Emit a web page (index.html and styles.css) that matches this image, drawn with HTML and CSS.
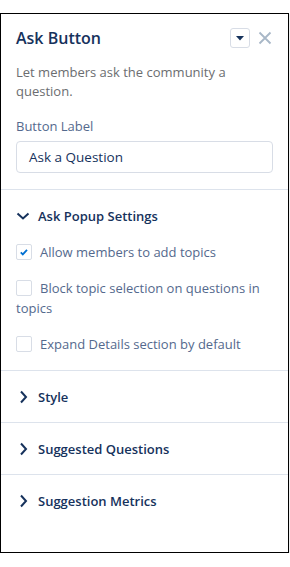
FILE: index.html
```html
<!DOCTYPE html>
<html>
<head>
<meta charset="utf-8">
<link rel="stylesheet" href="styles.css">
</head>
<body>
<div class="panel">
  <div class="head">
    <div class="title-row">
      <h1 class="title">Ask Button</h1>
      <div class="actions">
        <button class="menu-btn" aria-label="menu">
          <svg width="8" height="5" viewBox="0 0 8 5"><path d="M0 0h8L4 4.5z" fill="#16325c"/></svg>
        </button>
        <span class="close">
          <svg width="16" height="16" viewBox="0 0 16 16"><path d="M2.5 2.5l11 11M13.5 2.5l-11 11" stroke="#a8b7c7" stroke-width="1.8" fill="none"/></svg>
        </span>
      </div>
    </div>
    <p class="desc">Let members ask the community a question.</p>
    <label class="field-label">Button Label</label>
    <div class="input">Ask a Question</div>
  </div>

  <div class="section open">
    <div class="sec-head">
      <span class="chev"><svg width="14" height="14" viewBox="0 0 14 14"><path d="M1.5 4.5L7 9.5l5.5-5" stroke="#16325c" stroke-width="2" fill="none"/></svg></span>
      <span class="sec-title">Ask Popup Settings</span>
    </div>
    <div class="checks">
      <div class="check-row"><span class="box"><svg width="14" height="14" viewBox="0 0 14 14"><path d="M3.8 7.4l2 2 4.2-4.6" stroke="#0070d2" stroke-width="1.8" fill="none"/></svg></span>Allow members to add topics</div>
      <div class="check-row"><span class="box"></span>Block topic selection on questions in topics</div>
      <div class="check-row"><span class="box"></span>Expand Details section by default</div>
    </div>
  </div>

  <div class="section">
    <div class="sec-head">
      <span class="chev"><svg width="14" height="14" viewBox="0 0 14 14"><path d="M5 1.5l5 5.5-5 5.5" stroke="#16325c" stroke-width="2" fill="none"/></svg></span>
      <span class="sec-title">Style</span>
    </div>
  </div>
  <div class="section">
    <div class="sec-head">
      <span class="chev"><svg width="14" height="14" viewBox="0 0 14 14"><path d="M5 1.5l5 5.5-5 5.5" stroke="#16325c" stroke-width="2" fill="none"/></svg></span>
      <span class="sec-title">Suggested Questions</span>
    </div>
  </div>
  <div class="section last">
    <div class="sec-head">
      <span class="chev"><svg width="14" height="14" viewBox="0 0 14 14"><path d="M5 1.5l5 5.5-5 5.5" stroke="#16325c" stroke-width="2" fill="none"/></svg></span>
      <span class="sec-title">Suggestion Metrics</span>
    </div>
  </div>
</div>
</body>
</html>
```

FILE: styles.css
```css
* { box-sizing: border-box; }
html, body { margin: 0; padding: 0; background: #fff; }
body {
  font-family: "Open Sans", "Noto Sans", sans-serif;
  color: #16325c;
  padding-top: 13px;
}
.panel {
  width: 289px;
  height: 540px;
  border: 1px solid #000;
  background: #fff;
  box-shadow: 0 1px 1px rgba(0,0,0,0.35);
}
.head {
  padding: 14px 15px 16px 15px;
  border-bottom: 1px solid #dde3ec;
}
.title-row {
  display: flex;
  align-items: center;
  justify-content: space-between;
  height: 20px;
}
.title {
  margin: 0;
  font-size: 16px;
  font-weight: 600;
  line-height: 20px;
  color: #16325c;
}
.actions {
  display: flex;
  align-items: center;
  gap: 7px;
}
.menu-btn {
  width: 20px;
  height: 20px;
  padding: 0;
  border: 1px solid #d8dde6;
  border-radius: 3px;
  background: #fff;
  display: flex;
  align-items: center;
  justify-content: center;
}
.close {
  display: flex;
  width: 16px;
  height: 16px;
}
.desc {
  margin: 15px 0 0 0;
  font-size: 13px;
  line-height: 19px;
  color: #6b6d70;
}
.field-label {
  display: block;
  margin-top: 16px;
  font-size: 13px;
  line-height: 18px;
  color: #54698d;
}
.input {
  margin-top: 6px;
  height: 32px;
  border: 1px solid #d8dde6;
  border-radius: 4px;
  padding: 0 12px;
  font-size: 13.5px;
  line-height: 30px;
  color: #16325c;
}
.section {
  border-bottom: 1px solid #dde3ec;
  padding: 0 15px;
}
.section.last { border-bottom: none; }
.sec-head {
  display: flex;
  align-items: center;
  gap: 8px;
  height: 51px;
}
.chev { display: flex; width: 14px; height: 14px; }
.sec-title {
  font-size: 13px;
  font-weight: 600;
  color: #16325c;
}
.section.open .sec-head { height: 52px; }
.checks {
  padding: 0 0 16px 0;
  display: flex;
  flex-direction: column;
  gap: 16px;
}
.check-row {
  font-size: 13px;
  line-height: 20px;
  color: #54698d;
}
.box {
  display: inline-block;
  width: 16px;
  height: 16px;
  border: 1px solid #d8dde6;
  border-radius: 2px;
  vertical-align: -3px;
  margin-right: 8px;
  position: relative;
}
.box svg { position: absolute; left: 0; top: 0; }
```
